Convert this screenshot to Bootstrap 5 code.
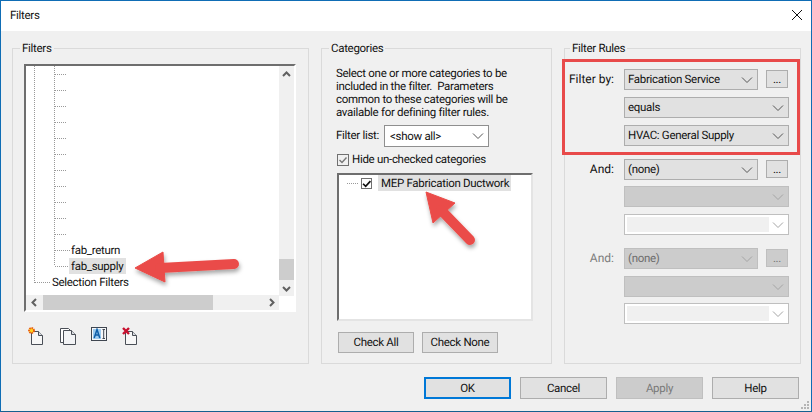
<!DOCTYPE html>
<html lang="en"><head><meta charset="utf-8"><title>Filters</title>
<link href="https://cdn.jsdelivr.net/npm/bootstrap@5.3.0/dist/css/bootstrap.min.css" rel="stylesheet">
<style>
html,body{margin:0;width:812px;height:412px;overflow:hidden;background:#f0f0f0}
body,.btn,.form-select{font-family:Roboto,"Liberation Sans",sans-serif;font-size:11.5px;letter-spacing:-.3px;color:#111;text-rendering:geometricPrecision}
.win{width:812px;height:412px;border:1px solid #0f6db5;border-bottom-color:#16608f;background:#f0f0f0;position:relative}
.ttl{height:30px;background:#fff;padding-left:9px}
.grp{border:1px solid #dadada;height:316px;position:relative}
.grp-a{width:297px;padding:15px 0 0 11px}
.grp-b{width:231px;padding:15px 0 0 14px;margin-left:12px}
.grp-c{width:237px;padding-top:20px;margin-left:12px}
.main{padding:17px 0 0 11px}
.cap{position:absolute;top:-9px;left:7px;background:#f0f0f0;padding:0 2px;line-height:16px}
.grp-c .cap{left:5px}
.tree{width:272px;height:248px;border:2px solid #fff;border-top-color:#6e6e6e;border-left-color:#6e6e6e;background:#fff;position:relative;overflow:hidden}
.rw{height:16px;line-height:16px;position:relative;white-space:nowrap}
.dh{position:absolute;height:1px;background:repeating-linear-gradient(90deg,#999 0 1px,transparent 1px 2px)}
.dv{position:absolute;width:1px;background:repeating-linear-gradient(180deg,#999 0 1px,transparent 1px 2px)}
.lbl{position:absolute;top:0;left:43px;padding:0 3px 0 2px}
.sel{background:#e1e1e1}
.vs{position:absolute;right:0;top:0;width:15px;height:230px;background:#f0f0f0}
.hs{position:absolute;left:0;bottom:0;width:253px;height:15px;background:#f0f0f0}
.thv{position:absolute;top:193px;left:0;width:15px;height:21px;background:#cdcdcd}
.thh{position:absolute;left:17px;top:0;width:170px;height:15px;background:#cdcdcd}
.ar{position:absolute;display:block}
.tools{margin-top:15px;padding-left:4px;gap:15px}
.tools svg{flex:none}
.para{line-height:13px;margin:3px 0 0;white-space:nowrap}
.form-select.cb{height:21px;min-height:0;padding:0 18px 0 3px;border:1px solid #adadad;border-radius:0;background-color:#e1e1e1;background-position:right 4px center;background-size:12px 8px;font-size:11.5px;line-height:19px;color:#111;box-shadow:none;background-image:url("data:image/svg+xml,%3Csvg xmlns='http://www.w3.org/2000/svg' viewBox='0 0 12 8'%3E%3Cpath d='M1 1.5l5 5 5-5' fill='none' stroke='%23555'/%3E%3C/svg%3E")}
.form-select.cb.wh{background-color:#fff;padding-left:5px;height:22px;width:105px;border-color:#8f8f8f}
.form-select.cb:disabled{background-color:#ccc;border-color:#bfbfbf;color:#6d6d6d;opacity:1;background-image:url("data:image/svg+xml,%3Csvg xmlns='http://www.w3.org/2000/svg' viewBox='0 0 12 8'%3E%3Cpath d='M1 1.5l5 5 5-5' fill='none' stroke='%23a5a5a5'/%3E%3C/svg%3E")}
.w-s{width:134px}.w-l{width:165px}
.emp{width:165px;height:21px;background:#fff;border:1px solid #bfbfbf;padding:2px;position:relative}
.emp i{display:block;width:142px;height:15px;background:#f0f0f0}
.emp svg{position:absolute;right:4px;top:6px}
.form-check-input.ck{width:12px;height:12px;margin:0;border:1px solid #707070;border-radius:0;background-color:#fff;flex:none;background-size:10px 10px;background-image:url("data:image/svg+xml,%3Csvg xmlns='http://www.w3.org/2000/svg' viewBox='0 0 10 10'%3E%3Cpath d='M1.500 5l2.500 2.500 4.500-5' fill='none' stroke='%23111' stroke-width='1.600'/%3E%3C/svg%3E")}
.form-check-input.ck.gr{background-color:#f0f0f0;background-image:url("data:image/svg+xml,%3Csvg xmlns='http://www.w3.org/2000/svg' viewBox='0 0 10 10'%3E%3Cpath d='M1.500 5l2.500 2.500 4.500-5' fill='none' stroke='%23777' stroke-width='1.400'/%3E%3C/svg%3E")}
.flt{margin-top:6px;gap:5px;height:22px}
.hide{margin:7px 0 0 1px;gap:3px;height:12px}
.lst{width:196px;height:148px;margin:7px 0 0 1px;border:2px solid #e4e4e4;border-top-color:#6e6e6e;border-left-color:#6e6e6e;background:#fff;position:relative}
.lst .dh{left:8px;top:8px;width:11px}
.lst .ck{position:absolute;left:22px;top:3px;width:11px;height:11px}
.lst .it{position:absolute;left:39px;top:0;width:133px;height:16px;line-height:16px;padding-left:3px;background:#e1e1e1;white-space:nowrap}
.ckb{margin:11px 0 0 2px;gap:8px}
.btn.wb{width:76px;height:21px;padding:0;border:1px solid #adadad;border-radius:0;background:#e1e1e1;color:#111;font-size:11.5px;line-height:19px}
.btn.fb{width:87px;height:22px;padding:0;border:1px solid #adadad;border-radius:0;background:#e1e1e1;color:#111;font-size:11.5px;line-height:20px;opacity:1}
.btn.fb.pri{border:2px solid #0078d7;line-height:18px}
.btn.fb:disabled{background:#ccc;border-color:#bfbfbf;color:#7a7a7a}
.ftr{margin-top:13px;padding-right:12px;gap:9px}
.rule .l{width:49px;text-align:right;margin-right:10px;line-height:21px;flex:none;font-size:12px;letter-spacing:0}
.rule .off{color:#7d7d7d}
.gap7{margin-top:7px}.gap6{margin-top:6px}.gap12{margin-top:13px}
.in{margin-left:59px}
.btn.dots{width:22px;height:18px;margin:1px 0 0 8px;padding:0;border:1px solid #adadad;border-radius:0;background:#e1e1e1;color:#111;font-size:11.5px;line-height:14px}
.btn.dots:disabled{background:#ccc;border-color:#bfbfbf;color:#777;opacity:1}
.redbox{position:absolute;left:-3px;top:10px;width:238px;height:96px;border:3px solid #e84a4a}
.anno{position:absolute;left:-1px;top:-1px;width:812px;height:412px;pointer-events:none}
.x{position:absolute;right:8px;top:8px}
.grip{position:absolute;right:1px;bottom:1px}
</style></head><body>
<div class="win d-flex flex-column">
 <div class="ttl d-flex align-items-center">Filters</div>
 <svg class="x" width="12" height="12" viewBox="0 0 12 12"><path d="M1 1l10 10M11 1L1 11" stroke="#111" fill="none"/></svg>
 <div class="main d-flex">
  <div class="grp grp-a">
   <div class="cap">Filters</div>
   <div class="tree">
    <div class="dv" style="left:8px;top:0;height:218px"></div>
    <div class="dv" style="left:28px;top:0;height:200px"></div>
    <div class="rw"><span class="dh" style="left:29px;top:8px;width:11px"></span></div>
    <div class="rw"><span class="dh" style="left:29px;top:8px;width:11px"></span></div>
    <div class="rw"><span class="dh" style="left:29px;top:8px;width:11px"></span></div>
    <div class="rw"><span class="dh" style="left:29px;top:8px;width:11px"></span></div>
    <div class="rw"><span class="dh" style="left:29px;top:8px;width:11px"></span></div>
    <div class="rw"><span class="dh" style="left:29px;top:8px;width:11px"></span></div>
    <div class="rw"><span class="dh" style="left:29px;top:8px;width:11px"></span></div>
    <div class="rw"><span class="dh" style="left:29px;top:8px;width:11px"></span></div>
    <div class="rw"><span class="dh" style="left:29px;top:8px;width:11px"></span></div>
    <div class="rw"><span class="dh" style="left:29px;top:8px;width:11px"></span></div>
    <div class="rw"><span class="dh" style="left:29px;top:8px;width:11px"></span></div>
    <div class="rw"><span class="dh" style="left:29px;top:8px;width:15px"></span><span class="lbl">fab_return</span></div>
    <div class="rw"><span class="dh" style="left:29px;top:8px;width:15px"></span><span class="lbl sel">fab_supply</span></div>
    <div class="rw"><span class="dh" style="left:9px;top:8px;width:15px"></span><span class="lbl" style="left:24px">Selection Filters</span></div>
    <div class="vs">
     <svg class="ar" style="left:3px;top:5px" width="9" height="6" viewBox="0 0 9 6"><path d="M1 5l3.500-3.500L8 5" fill="none" stroke="#606060" stroke-width="2"/></svg>
     <div class="thv"></div>
     <svg class="ar" style="left:3px;top:220px" width="9" height="6" viewBox="0 0 9 6"><path d="M1 1l3.500 3.500L8 1" fill="none" stroke="#606060" stroke-width="2"/></svg>
    </div>
    <div class="hs">
     <svg class="ar" style="left:5px;top:3px" width="6" height="9" viewBox="0 0 6 9"><path d="M5 1L1.500 4.500 5 8" fill="none" stroke="#606060" stroke-width="2"/></svg>
     <div class="thh"></div>
     <svg class="ar" style="left:243px;top:3px" width="6" height="9" viewBox="0 0 6 9"><path d="M1 1l3.500 3.500L1 8" fill="none" stroke="#606060" stroke-width="2"/></svg>
    </div>
   </div>
   <div class="tools d-flex align-items-start">
    <svg width="16" height="18" viewBox="0 0 16 18"><path d="M3.500 4.500h7l4 4v9h-11z" fill="#f7f7f7" stroke="#4a4f57"/><path d="M10.500 4.500v4h4" fill="#d8dbe0" stroke="#4a4f57"/><circle cx="3.500" cy="3.500" r="2.500" fill="#ffd21f" stroke="#e8590c" stroke-width="1.800" stroke-dasharray="1.500 .8"/></svg>
    <svg width="17" height="18" viewBox="0 0 17 18"><path d="M5.500 15.500h-4v-14h8l2 2" fill="#fff" stroke="#4a4f57"/><path d="M4.500 3.500h8l4 4v10h-12z" fill="#f2f3f5" stroke="#4a4f57"/><path d="M12.500 3.500v4h4" fill="#d8dbe0" stroke="#4a4f57"/></svg>
    <svg width="16" height="14" viewBox="0 0 16 14"><rect x=".5" y=".5" width="15" height="13" fill="#f6f7f8" stroke="#3f4650"/><rect x="2" y="2" width="8" height="10" fill="#9ccbf0"/><path d="M3.200 11l2.800-8.500L8.800 11M4.300 8h3.400" fill="none" stroke="#0f5ea8" stroke-width="1.500"/><path d="M11.500 2.500h2.500M12.700 2.500v9M11.500 11.500h2.500" fill="none" stroke="#3f4650"/></svg>
    <svg width="16" height="18" viewBox="0 0 16 18"><path d="M3.500 4.500h7l4 4v9h-11z" fill="#f7f7f7" stroke="#4a4f57"/><path d="M10.500 4.500v4h4" fill="#d8dbe0" stroke="#4a4f57"/><path d="M1 1l6 6M7 1L1 7" stroke="#c8102e" stroke-width="2.400" fill="none"/></svg>
   </div>
  </div>
  <div class="grp grp-b">
   <div class="cap">Categories</div>
   <p class="para">Select one or more categories to be<br>included in the filter.&nbsp; Parameters<br>common to these categories will be<br>available for defining filter rules.</p>
   <div class="flt d-flex align-items-center"><span>Filter list:</span><select class="form-select cb wh"><option>&lt;show all&gt;</option></select></div>
   <div class="hide d-flex align-items-center"><input class="form-check-input ck gr" type="checkbox" checked aria-label="Hide"><span>Hide un-checked categories</span></div>
   <div class="lst">
    <span class="dh"></span>
    <input class="form-check-input ck" type="checkbox" checked aria-label="MEP">
    <span class="it">MEP Fabrication Ductwork</span>
   </div>
   <div class="ckb d-flex"><button class="btn wb">Check All</button><button class="btn wb">Check None</button></div>
  </div>
  <div class="grp grp-c">
   <div class="cap">Filter Rules</div>
   <div class="redbox"></div>
   <div class="rule d-flex"><span class="l">Filter by:</span><select class="form-select cb w-s"><option>Fabrication Service</option></select><button class="btn dots">...</button></div>
   <div class="in gap7"><select class="form-select cb w-l"><option>equals</option></select></div>
   <div class="in gap7"><select class="form-select cb w-l"><option>HVAC: General Supply</option></select></div>
   <div class="rule d-flex gap12"><span class="l">And:</span><select class="form-select cb w-s"><option>(none)</option></select><button class="btn dots">...</button></div>
   <div class="in gap6"><select class="form-select cb w-l" disabled><option></option></select></div>
   <div class="in gap7"><div class="emp"><i></i><svg width="12" height="8" viewBox="0 0 12 8"><path d="M1 1.500l5 5 5-5" fill="none" stroke="#a5a5a5"/></svg></div></div>
   <div class="rule d-flex gap12"><span class="l off">And:</span><select class="form-select cb w-s" disabled><option>(none)</option></select><button class="btn dots" disabled>...</button></div>
   <div class="in gap7"><select class="form-select cb w-l" disabled><option></option></select></div>
   <div class="in gap6"><div class="emp"><i></i><svg width="12" height="8" viewBox="0 0 12 8"><path d="M1 1.500l5 5 5-5" fill="none" stroke="#a5a5a5"/></svg></div></div>
  </div>
 </div>
 <div class="ftr d-flex justify-content-end">
  <button class="btn fb pri">OK</button><button class="btn fb">Cancel</button><button class="btn fb" disabled>Apply</button><button class="btn fb">Help</button>
 </div>
 <svg class="grip" width="10" height="10" viewBox="0 0 10 10" fill="#b5b5b5"><rect x="7" y="1" width="2" height="2"/><rect x="4" y="4" width="2" height="2"/><rect x="7" y="4" width="2" height="2"/><rect x="1" y="7" width="2" height="2"/><rect x="4" y="7" width="2" height="2"/><rect x="7" y="7" width="2" height="2"/></svg>
 <svg class="anno" viewBox="0 0 812 412">
  <defs><filter id="sh" x="-20%" y="-30%" width="140%" height="160%"><feDropShadow dx="1" dy="3" stdDeviation="2" flood-color="#000" flood-opacity=".35"/></filter></defs>
  <g filter="url(#sh)" fill="#ea4c48" stroke="#ea4c48">
   <path d="M135 268L163 252L165 282Z" stroke-linejoin="round"/><path d="M160 268L234 264" stroke-width="10" stroke-linecap="round" fill="none"/>
  </g>
  <g filter="url(#sh)" fill="#ea4c48" stroke="#ea4c48">
   <path d="M426 192L455 203L433 223Z" stroke-linejoin="round"/><path d="M441 210L470 240" stroke-width="10" stroke-linecap="round" fill="none"/>
  </g>
 </svg>
</div>
<script src="https://cdn.jsdelivr.net/npm/bootstrap@5.3.0/dist/js/bootstrap.bundle.min.js"></script>
</body></html>
